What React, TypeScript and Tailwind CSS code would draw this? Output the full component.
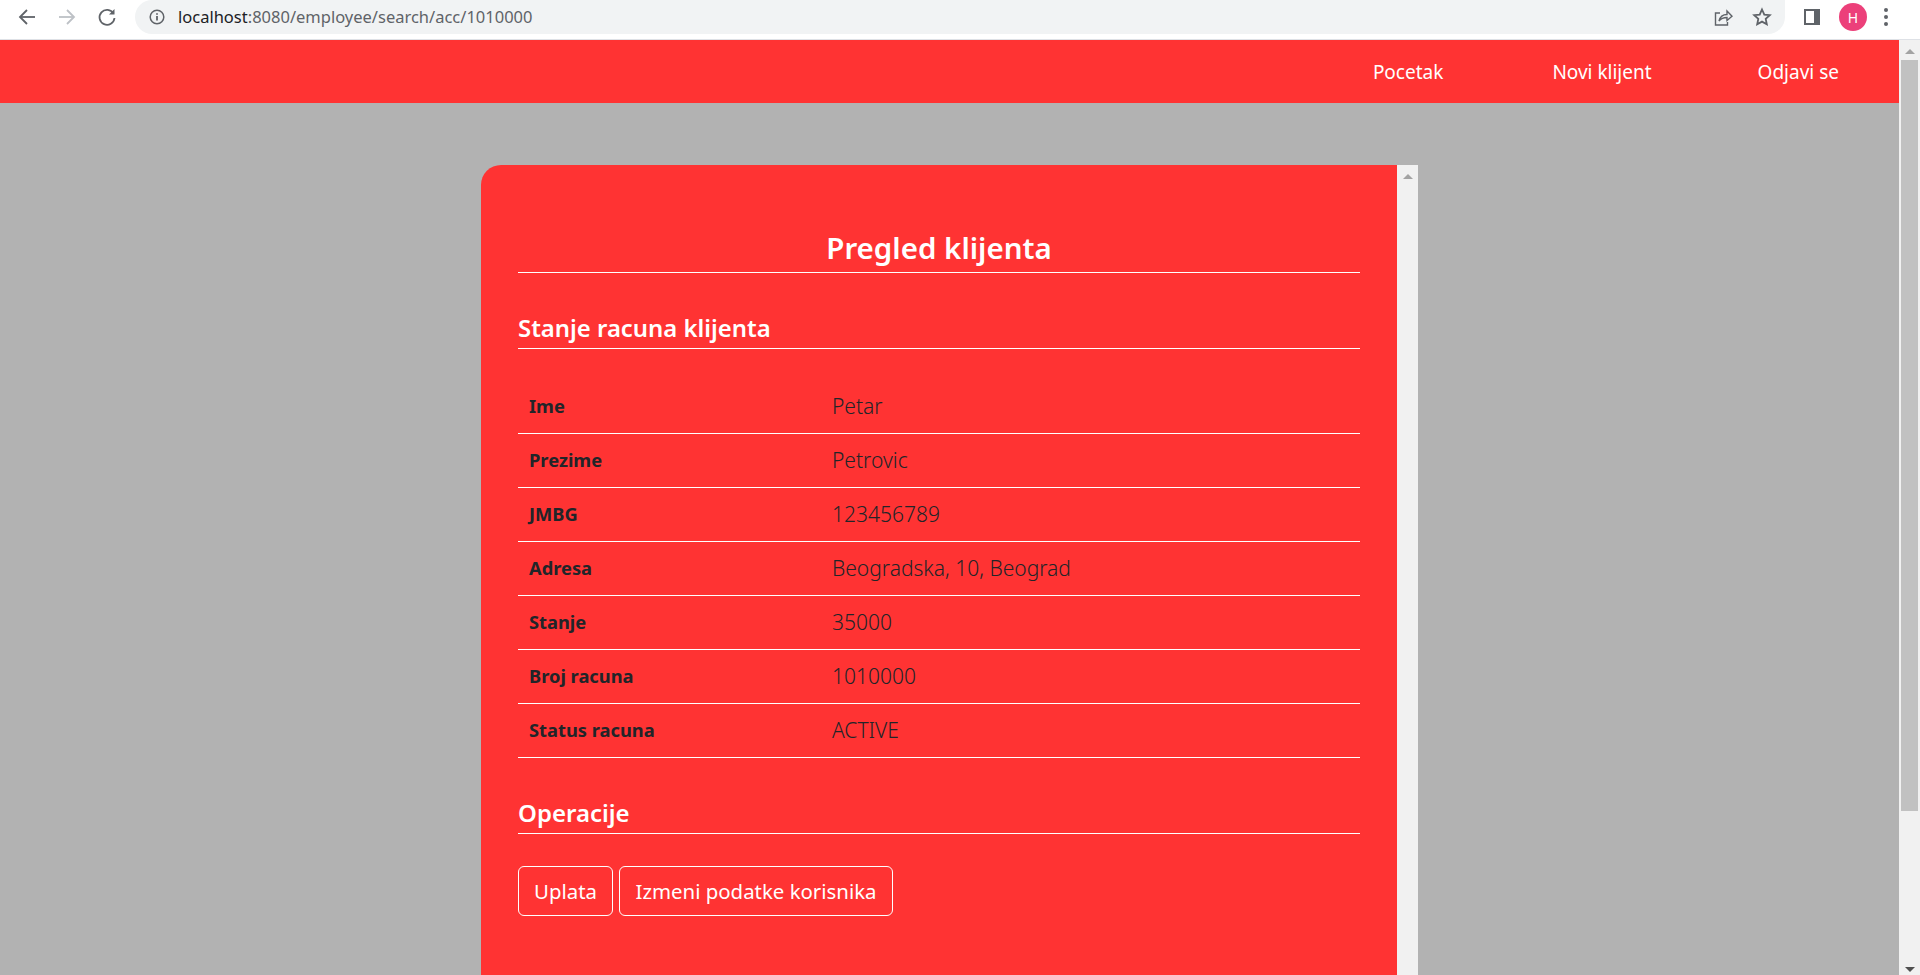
const rows = [
  { label: "Ime", value: "Petar" },
  { label: "Prezime", value: "Petrovic" },
  { label: "JMBG", value: "123456789" },
  { label: "Adresa", value: "Beogradska, 10, Beograd" },
  { label: "Stanje", value: "35000" },
  { label: "Broj racuna", value: "1010000" },
  { label: "Status racuna", value: "ACTIVE" },
];

const BackIcon = ({ color }: { color: string }) => (
  <svg width="20" height="20" viewBox="0 0 20 20" fill="none" stroke={color} strokeWidth="1.8">
    <path d="M18 10H3" />
    <path d="M10 3l-7 7 7 7" />
  </svg>
);

const ForwardIcon = ({ color }: { color: string }) => (
  <svg width="20" height="20" viewBox="0 0 20 20" fill="none" stroke={color} strokeWidth="1.8">
    <path d="M2 10h15" />
    <path d="M10 3l7 7-7 7" />
  </svg>
);

const ReloadIcon = () => (
  <svg width="20" height="20" viewBox="0 0 20 20" fill="none" stroke="#5f6368" strokeWidth="1.8">
    <path d="M16.500 6.500A7.500 7.500 0 1 0 17.500 11" />
    <path d="M17.500 2v5.500H12" fill="#5f6368" stroke="none" />
  </svg>
);

const InfoIcon = () => (
  <svg width="16" height="16" viewBox="0 0 16 16" fill="none" stroke="#5f6368" strokeWidth="1.5">
    <circle cx="8" cy="8" r="6.800" />
    <path d="M8 7v4.500" strokeWidth="1.800" />
    <path d="M8 4.200v1.600" strokeWidth="1.800" />
  </svg>
);

const ShareIcon = () => (
  <svg width="20" height="20" viewBox="0 0 20 20" fill="none" stroke="#5f6368" strokeWidth="1.400">
    <path d="M7 6H2.500v12h12v-3" />
    <path d="M6 14c1-4 4-6.500 8-6.500V4l5 5.200-5 4.300v-3c-3.500 0-6 1-8 3.500z" />
  </svg>
);

const StarIcon = () => (
  <svg width="20" height="20" viewBox="0 0 20 20" fill="none" stroke="#5f6368" strokeWidth="1.800">
    <path d="M10 2.500l2.300 5.100 5.500.6-4.100 3.700 1.100 5.400L10 14.600l-4.800 2.700 1.100-5.400-4.100-3.700 5.500-.6z" />
  </svg>
);

const PanelIcon = () => (
  <svg width="18" height="18" viewBox="0 0 18 18">
    <rect x="1" y="1" width="16" height="16" fill="#5f6368" />
    <rect x="3" y="3" width="8" height="12" fill="#ffffff" />
  </svg>
);

const Scrollbar = ({ thumb }: { thumb: boolean }) => (
  <div className="w-[21px] shrink-0 h-full bg-[#f1f1f1] flex flex-col items-center pt-[9px]">
    <div className="w-0 h-0 border-x-[5px] border-x-transparent border-b-[5px] border-b-[#a3a3a3]" />
    {thumb && <div className="w-[17px] h-[751px] mt-[6px] bg-[#c1c1c1]" />}
    {thumb && (
      <div className="mt-auto mb-[3px] w-0 h-0 border-x-[5px] border-x-transparent border-t-[5px] border-t-[#505050]" />
    )}
  </div>
);

export default function App() {
  return (
    <div className="w-[1920px] h-[975px] overflow-hidden flex flex-col font-['Noto_Sans',sans-serif]">
      <div className="h-[40px] shrink-0 bg-white border-b border-[#dee1e6] flex items-start">
        <div className="w-[135px] h-[34px] flex items-center pl-[17px] gap-[20px]">
          <BackIcon color="#5f6368" />
          <ForwardIcon color="#bdc1c6" />
          <ReloadIcon />
        </div>
        <div className="w-[1650px] h-[34px] bg-[#f1f3f4] rounded-b-[17px] rounded-l-[17px] flex items-center pl-[14px] pr-[13px]">
          <InfoIcon />
          <span className="ml-[13px] text-[16.5px] text-[#5f6368]">
            <span className="text-[#202124]">localhost</span>:8080/employee/search/acc/1010000
          </span>
          <div className="ml-auto flex items-center gap-[19px]">
            <ShareIcon />
            <StarIcon />
          </div>
        </div>
        <div className="flex-1 h-[34px] flex items-center pl-[18px]">
          <PanelIcon />
          <div className="ml-[18px] w-[28px] h-[28px] rounded-full bg-[#ec407a] text-white text-[14px] flex items-center justify-center">
            H
          </div>
          <div className="ml-[17px] flex flex-col gap-[3px]">
            <div className="w-[4px] h-[4px] rounded-full bg-[#5f6368]" />
            <div className="w-[4px] h-[4px] rounded-full bg-[#5f6368]" />
            <div className="w-[4px] h-[4px] rounded-full bg-[#5f6368]" />
          </div>
        </div>
      </div>

      <div className="flex-1 flex min-h-0">
        <div className="flex-1 flex flex-col min-w-0">
          <nav className="h-[63px] shrink-0 bg-[#ff3333] flex items-center justify-end pr-[60px] text-white text-[19px] leading-[30px]">
            <a className="mr-[109px] pt-[1px]">Pocetak</a>
            <a className="mr-[106px] pt-[1px]">Novi klijent</a>
            <a className="pt-[1px]">Odjavi se</a>
          </nav>
          <div className="flex-1 bg-[#b2b2b2] flex justify-center pt-[62px] min-h-0">
            <div className="flex h-[820px]">
              <div className="w-[916px] bg-[#ff3333] rounded-tl-[20px] px-[37px] pt-[60px]">
                <h2 className="h-[48px] border-b border-white flex items-center justify-center text-white text-[29.5px] font-semibold">
                  Pregled klijenta
                </h2>
                <h3 className="mt-[37px] h-[39px] pb-[2px] border-b border-white flex items-center text-white text-[23.9px] font-semibold">
                  Stanje racuna klijenta
                </h3>
                <div className="mt-[31px]">
                  {rows.map((r) => (
                    <div key={r.label} className="h-[54px] border-b border-white flex items-center text-[#212529]">
                      <div className="w-[314px] pl-[11px] pb-[2px] text-[18.3px] font-bold">{r.label}</div>
                      <div className="text-[21px] font-light">{r.value}</div>
                    </div>
                  ))}
                </div>
                <h3 className="mt-[36px] h-[40px] pb-[2px] border-b border-white flex items-center text-white text-[24px] font-semibold">
                  Operacije
                </h3>
                <div className="mt-[32px] flex gap-[6px]">
                  <button className="h-[50px] w-[95px] border border-white rounded-[6px] text-white text-[20.4px]">
                    Uplata
                  </button>
                  <button className="h-[50px] w-[274px] border border-white rounded-[6px] text-white text-[20.4px]">
                    Izmeni podatke korisnika
                  </button>
                </div>
              </div>
              <Scrollbar thumb={false} />
            </div>
          </div>
        </div>
        <Scrollbar thumb={true} />
      </div>
    </div>
  );
}
